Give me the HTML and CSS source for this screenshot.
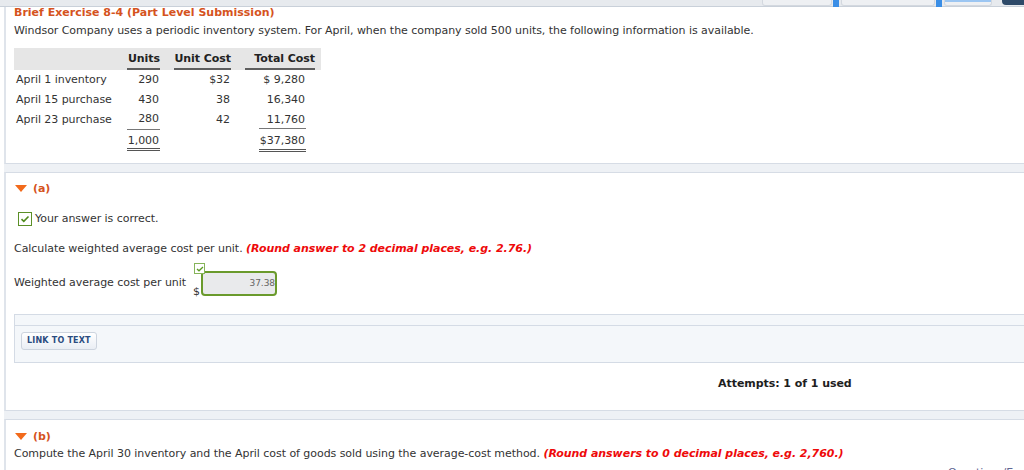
FILE: index.html
```html
<!DOCTYPE html>
<html lang="en">
<head>
<meta charset="utf-8">
<title>Brief Exercise 8-4</title>
<link rel="stylesheet" href="styles.css">
</head>
<body>
<div class="topbar">
  <span class="tb-btn tb-w1"></span>
  <span class="tb-sep"></span>
  <span class="tb-btn tb-w2"></span>
  <span class="tb-sep"></span>
  <span class="tb-btn tb-light"></span>
  <span class="tb-dark"></span>
</div>
<div class="page">
  <section class="box box-intro">
    <h1 class="title">Brief Exercise 8-4 (Part Level Submission)</h1>
    <p class="text desc">Windsor Company uses a periodic inventory system. For April, when the company sold 500 units, the following information is available.</p>
    <div class="inv-table">
      <div class="th th-label"></div>
      <div class="th">Units</div>
      <div class="th">Unit Cost</div>
      <div class="th">Total Cost</div>

      <div class="td label">April 1 inventory</div>
      <div class="td num">290</div>
      <div class="td num">$32</div>
      <div class="td num tot"><span class="amt">$ 9,280</span></div>

      <div class="td label">April 15 purchase</div>
      <div class="td num">430</div>
      <div class="td num">38</div>
      <div class="td num tot"><span class="amt">16,340</span></div>

      <div class="td label">April 23 purchase</div>
      <div class="td num under">280</div>
      <div class="td num">42</div>
      <div class="td num tot"><span class="amt under">11,760</span></div>

      <div class="td label"></div>
      <div class="td num dbl">1,000</div>
      <div class="td num"></div>
      <div class="td num tot"><span class="amt dbl">$37,380</span></div>
    </div>
  </section>

  <section class="box box-a">
    <div class="part-head"><span class="tri"></span><span class="part-label">(a)</span></div>
    <div class="correct">
      <span class="chk">
        <svg width="10" height="8" viewBox="0 0 10 8"><path d="M1.5 4.2 L3.8 6.3 L8.5 1.5" fill="none" stroke="#4f8a1c" stroke-width="1.6"/></svg>
      </span>
      <span class="text">Your answer is correct.</span>
    </div>
    <p class="text q">Calculate weighted average cost per unit. <em class="hint">(Round answer to 2 decimal places, e.g. 2.76.)</em></p>
    <div class="answer-row">
      <span class="text ans-label">Weighted average cost per unit</span>
      <div class="ans-group">
        <span class="mini-chk">
          <svg width="8" height="6" viewBox="0 0 8 6"><path d="M1 3 L3 4.8 L7 1" fill="none" stroke="#5c9a24" stroke-width="1.3"/></svg>
        </span>
        <span class="dollar">$</span>
        <span class="ans-input">37.38</span>
      </div>
    </div>
    <div class="panel">
      <div class="panel-head"></div>
      <div class="panel-body"><span class="link-btn">LINK TO TEXT</span></div>
    </div>
    <div class="attempts">Attempts: 1 of 1 used</div>
  </section>

  <section class="box box-b">
    <div class="part-head"><span class="tri"></span><span class="part-label">(b)</span></div>
    <p class="text q2">Compute the April 30 inventory and the April cost of goods sold using the average-cost method. <em class="hint">(Round answers to 0 decimal places, e.g. 2,760.)</em></p>
    <div class="qe">Questions/Exercises</div>
  </section>
</div>
</body>
</html>
```

FILE: styles.css
```css
html, body {
  margin: 0;
  padding: 0;
  background: #ffffff;
  overflow: hidden;
}
body {
  font-family: "DejaVu Sans", Verdana, sans-serif;
  font-size: 11px;
  letter-spacing: -0.05px;
  color: #333333;
  width: 1024px;
  height: 470px;
}
.topbar {
  height: 6px;
  background: #e7eaee;
  border-bottom: 1px solid #c9d0d9;
  display: flex;
  align-items: flex-start;
  padding-left: 762px;
}
.tb-btn {
  height: 5px;
  background: #eef0f3;
  border: 1px solid #d3d8df;
  border-top: none;
  border-radius: 0 0 3px 3px;
}
.tb-w1 { width: 68px; }
.tb-w2 { width: 92px; margin-left: 2px; }
.tb-light {
  width: 46px;
  margin-left: 2px;
  background: #eef0f3;
  box-shadow: inset 0 2px 0 #9cc6f2;
}
.tb-sep {
  width: 6px;
  height: 7px;
  margin-left: 1px;
  background: #3a8ee6;
}
.tb-dark {
  width: 22px;
  height: 5px;
  margin-left: 10px;
  background: #2e4a69;
  border-radius: 0 0 0 4px;
}
.page {
  margin-left: 4px;
  background: #eef1f5;
}
.box {
  background: #ffffff;
  border-left: 2px solid #dfe4eb;
  padding-left: 8px;
}
.box-intro {
  border-bottom: 1px solid #d6dce5;
  padding-bottom: 12px;
}
.box-a {
  margin-top: 8px;
  border-top: 1px solid #d6dce5;
  border-bottom: 1px solid #d6dce5;
  padding-top: 8px;
  padding-bottom: 19px;
}
.box-b {
  margin-top: 8px;
  border-top: 1px solid #d6dce5;
  padding-top: 9px;
  height: 60px;
}
.title {
  margin: 0;
  font-size: 11px;
  line-height: 12px;
  font-weight: bold;
  color: #d5531d;
  letter-spacing: 0;
}
.text {
  margin: 0;
  line-height: 14px;
}
.desc { margin-top: 5px; }

.inv-table {
  margin-top: 10px;
  display: grid;
  grid-template-columns: 99px 33px 57px 70px;
  column-gap: 14px;
  width: 303px;
  padding-right: 4px;
  background: linear-gradient(#e6e6e6, #e6e6e6) left top / 100% 22px no-repeat;
}
.th {
  height: 20px;
  line-height: 21px;
  font-weight: bold;
  color: #222;
  text-align: right;
  white-space: nowrap;
  border-bottom: 2px solid #5e5e5e;
}
.th-label { border-bottom: none; }
.td {
  height: 20px;
  line-height: 20px;
  white-space: nowrap;
}
.td.label { padding-left: 2px; }
.num { text-align: right; padding-right: 1px; }
.tot { padding-right: 9px; }
.amt {
  display: inline-block;
  min-width: 46px;
  text-align: right;
  line-height: 17px;
  padding-right: 1px;
}
.under { border-bottom: 1px solid #777; }
.td.under { height: 19px; line-height: 18px; }
.dbl { border-bottom: 3px double #555; }
.td.dbl { height: 17px; line-height: 19px; margin-top: 1px; }
.td.tot:last-child { margin-top: 1px; }

.part-head {
  display: flex;
  align-items: center;
  height: 14px;
}
.tri {
  width: 0;
  height: 0;
  margin-left: 1px;
  border-left: 6px solid transparent;
  border-right: 6px solid transparent;
  border-top: 7px solid #f26a1b;
}
.part-label {
  margin-left: 6px;
  font-weight: bold;
  color: #d5531d;
}
.correct {
  margin-top: 17px;
  display: flex;
  align-items: center;
  padding-left: 4px;
  height: 14px;
}
.chk {
  width: 12px;
  height: 12px;
  border: 1px solid #5b8f27;
  display: flex;
  align-items: center;
  justify-content: center;
  margin-right: 3px;
}
.q { margin-top: 16px; }
.hint {
  color: #ee0a0a;
  font-weight: bold;
  font-style: italic;
}
.answer-row {
  margin-top: 8px;
  display: flex;
  align-items: flex-start;
}
.ans-label {
  padding-top: 12px;
}
.ans-group {
  position: relative;
  margin-left: 7px;
  padding-top: 7px;
  display: flex;
  align-items: flex-end;
}
.mini-chk {
  position: absolute;
  left: 1px;
  top: -1px;
  width: 9px;
  height: 9px;
  border: 1px solid #86b45a;
  background: #fff;
  display: flex;
  align-items: center;
  justify-content: center;
  z-index: 1;
}
.dollar {
  line-height: 12px;
  margin-bottom: -2px;
  width: 8px;
}
.ans-input {
  width: 72px;
  height: 21px;
  border: 2px solid #6a9a2c;
  border-radius: 4px;
  background: #e9eaec;
  color: #666;
  font-size: 9px;
  line-height: 21px;
  text-align: right;
}
.panel {
  margin-top: 18px;
  margin-right: -4px;
  border: 1px solid #d4dbe5;
  background: #f4f7fa;
}
.panel-head {
  height: 10px;
  border-bottom: 1px solid #d4dbe5;
}
.panel-body {
  padding: 6px 6px 12px;
  display: flex;
}
.link-btn {
  display: inline-block;
  height: 16px;
  line-height: 16px;
  padding: 0 5px;
  font-size: 8px;
  font-weight: bold;
  color: #2b4c80;
  background: linear-gradient(#ffffff, #eaeef4);
  border: 1px solid #cdd4de;
  border-radius: 3px;
  letter-spacing: 0.2px;
}
.attempts {
  margin-top: 14px;
  padding-left: 704px;
  line-height: 14px;
  font-weight: bold;
  color: #1e1e1e;
}
.q2 { margin-top: 4px; }
.qe {
  margin-top: 5px;
  padding-left: 934px;
  white-space: nowrap;
  line-height: 14px;
  color: #5f6592;
}
```
